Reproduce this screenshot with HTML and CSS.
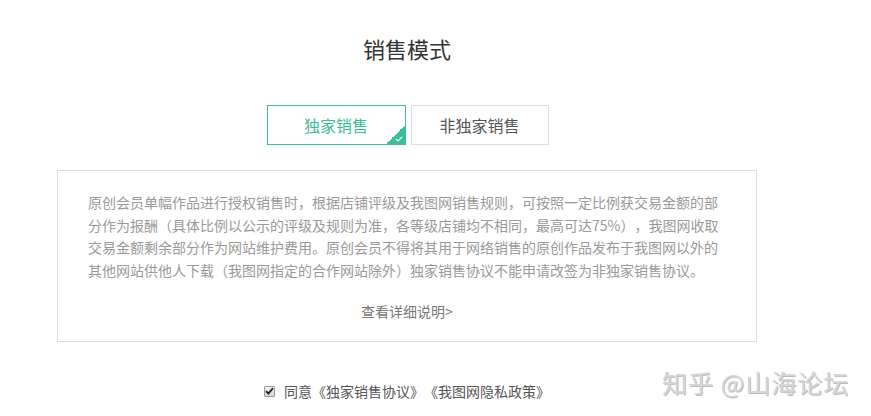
FILE: index.html
```html
<!DOCTYPE html>
<html lang="zh-CN">
<head>
    <meta charset="UTF-8">
    <title>销售模式</title>
    <link rel="stylesheet" href="styles.css">
</head>
<body>
    <div class="page">
        <h2 class="title">销售模式</h2>

        <div class="mode-tabs">
            <div class="mode-tab active">
                独家销售
                <span class="corner">
                    <svg width="8" height="6" viewBox="0 0 8 6"><path d="M0.8 3 L3 5 L7.2 0.8" fill="none" stroke="#fff" stroke-width="1.1"/></svg>
                </span>
            </div>
            <div class="mode-tab">非独家销售</div>
        </div>

        <div class="intro">
            <p>原创会员单幅作品进行授权销售时，根据店铺评级及我图网销售规则，可按照一定比例获交易金额的部分作为报酬（具体比例以公示的评级及规则为准，各等级店铺均不相同，最高可达75%），我图网收取交易金额剩余部分作为网站维护费用。原创会员不得将其用于网络销售的原创作品发布于我图网以外的其他网站供他人下载（我图网指定的合作网站除外）独家销售协议不能申请改签为非独家销售协议。</p>
            <a class="more" href="#">查看详细说明&gt;</a>
        </div>

        <label class="agree">
            <span class="check">
                <svg width="9" height="8" viewBox="0 0 9 8"><path d="M1 4.2 L3.4 6.6 L8 1.2" fill="none" stroke="#222" stroke-width="1.8"/></svg>
            </span>
            同意《独家销售协议》《我图网隐私政策》
        </label>
    </div>

    <div class="watermark">知乎 @山海论坛</div>
</body>
</html>
```

FILE: styles.css
```css
* {
    margin: 0;
    padding: 0;
    box-sizing: border-box;
}

body {
    font-family: "Noto Sans CJK SC", sans-serif;
    color: #333;
    background: #fff;
    position: relative;
    min-height: 416px;
    /* keep full-width punctuation, no trimming of adjacent marks */
    text-spacing-trim: space-all;
}

.page {
    width: 700px;
    margin-left: 57px;
    padding-top: 33px;
    text-align: center;
}

.title {
    font-size: 22px;
    font-weight: normal;
    line-height: 30px;
    color: #333;
}

.mode-tabs {
    display: flex;
    justify-content: center;
    gap: 5px;
    margin-top: 42px;
    padding-left: 1px;
}

.mode-tab {
    position: relative;
    width: 138px;
    height: 40px;
    line-height: 38px;
    border: 1px solid #ddd;
    font-size: 16px;
    color: #555;
    background: #fff;
    cursor: pointer;
}

.mode-tab.active {
    width: 139px;
    border-color: #3dbd99;
    color: #3dbd99;
}

.corner {
    position: absolute;
    right: -1px;
    bottom: -1px;
    width: 21px;
    height: 21px;
    background: linear-gradient(135deg, transparent 50%, #3dbd99 50%);
}

.corner svg {
    position: absolute;
    right: 3px;
    bottom: 3px;
}

.intro {
    margin-top: 25px;
    border: 1px solid #ddd;
    padding: 20px 30px 19px;
}

.intro p {
    font-size: 14px;
    line-height: 22.5px;
    color: #999;
    text-align: left;
}

.more {
    display: inline-block;
    margin-top: 19px;
    font-size: 14px;
    line-height: 22px;
    color: #777;
    text-decoration: none;
}

.agree {
    display: flex;
    align-items: center;
    justify-content: center;
    gap: 9px;
    margin-top: 38px;
    font-size: 14px;
    line-height: 22px;
    color: #555;
}

.check {
    display: flex;
    align-items: center;
    justify-content: center;
    width: 11px;
    height: 11px;
    border: 1px solid #9a9a9a;
    border-radius: 1px;
    background: linear-gradient(#f2f2f2, #d8d8d8);
}

.watermark {
    position: absolute;
    left: 662px;
    top: 364px;
    font-size: 25px;
    line-height: 36px;
    color: #d6d6d6;
    text-shadow: 1px 1px 0 #bcbcbc;
    letter-spacing: 1px;
}
```
